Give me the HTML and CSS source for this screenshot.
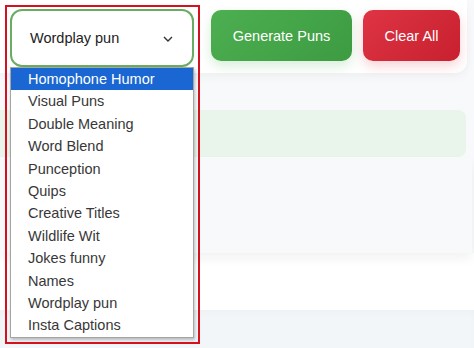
FILE: index.html
```html
<!DOCTYPE html>
<html lang="en">
<head>
  <meta charset="UTF-8">
  <meta name="viewport" content="width=device-width, initial-scale=1.0">
  <title>Pun Generator</title>
  <link rel="stylesheet" href="styles.css">
</head>
<body>
  <div class="page">
    <div class="toolbar">
      <div class="select-wrap">
        <div class="select-field">
          <span>Wordplay pun</span>
          <svg class="chevron" width="10" height="6" viewBox="0 0 10 6">
            <path d="M1 1 L5 5 L9 1" fill="none" stroke="#333" stroke-width="1.4"/>
          </svg>
        </div>
        <ul class="select-menu">
          <li class="active">Homophone Humor</li>
          <li>Visual Puns</li>
          <li>Double Meaning</li>
          <li>Word Blend</li>
          <li>Punception</li>
          <li>Quips</li>
          <li>Creative Titles</li>
          <li>Wildlife Wit</li>
          <li>Jokes funny</li>
          <li>Names</li>
          <li>Wordplay pun</li>
          <li>Insta Captions</li>
        </ul>
      </div>
      <button class="btn btn-generate">Generate Puns</button>
      <button class="btn btn-clear">Clear All</button>
    </div>

    <div class="result-bar"></div>
    <div class="result-list"></div>
    <div class="footer-card"></div>
    <div class="page-bottom"></div>

    <div class="highlight"></div>
  </div>
</body>
</html>
```

FILE: styles.css
```css
/* Pun generator page */
body {
  font-family: 'Liberation Sans', Arial, sans-serif;
  background-color: #f4f6f9;
  margin: 0;
  padding: 0;
}

.page {
  position: relative;
  width: 474px;
  height: 348px;
  overflow: hidden;
  background-color: #f8f9fb;
}

.toolbar {
  position: relative;
  z-index: 2;
  display: flex;
  align-items: flex-start;
  width: 467px;
  height: 73px;
  box-sizing: border-box;
  padding: 9px 0 0 10px;
  background-color: #ffffff;
  border-radius: 0 0 12px 0;
  box-shadow: 0 4px 10px rgba(0, 0, 0, 0.04);
}

.select-wrap {
  position: relative;
  margin-right: 17px;
}

.select-field {
  display: flex;
  align-items: center;
  justify-content: space-between;
  width: 184px;
  height: 58px;
  box-sizing: border-box;
  padding: 0 19px 0 18px;
  border: 2px solid #68ad62;
  border-radius: 12px;
  background-color: #ffffff;
  font-size: 14.5px;
  color: #222;
}

.chevron {
  margin-top: 2px;
}

.select-menu {
  position: absolute;
  left: 0;
  top: 58px;
  z-index: 2;
  width: 184px;
  margin: 0;
  padding: 0;
  list-style: none;
  box-sizing: border-box;
  background-color: #ffffff;
  border: 1px solid #a5a5a5;
  box-shadow: 1px 2px 3px rgba(0, 0, 0, 0.25);
}

.select-menu li {
  height: 22.4px;
  line-height: 22.4px;
  padding-left: 17px;
  font-size: 14.5px;
  color: #383838;
}

.select-menu li.active {
  background-color: #1a66d2;
  color: #ffffff;
}

.btn {
  height: 51px;
  margin-top: 1px;
  border: none;
  border-radius: 10px;
  font-family: 'Liberation Sans', Arial, sans-serif;
  font-size: 14.5px;
  color: #ffffff;
  cursor: pointer;
}

.btn-generate {
  width: 141px;
  margin-right: 11px;
  background: linear-gradient(135deg, #4caf50, #3d9b42);
  box-shadow: 0 5px 12px rgba(76, 175, 80, 0.22);
}

.btn-clear {
  width: 97px;
  background: linear-gradient(135deg, #de3444, #c8202f);
  box-shadow: 0 5px 12px rgba(220, 53, 69, 0.22);
}

.result-bar {
  width: 466px;
  height: 47px;
  margin-top: 37px;
  background-color: #e9f4ea;
  border-radius: 0 8px 8px 0;
}

.result-list {
  position: relative;
  z-index: 1;
  width: 472px;
  height: 96px;
  background-color: #f8f9fb;
  box-shadow: 0 6px 10px rgba(0, 0, 0, 0.05);
}

.footer-card {
  height: 57px;
  background-color: #ffffff;
}

.page-bottom {
  height: 40px;
  background-color: #f3f6f9;
  box-shadow: inset 0 4px 6px rgba(0, 0, 0, 0.02);
}

.highlight {
  position: absolute;
  left: 5px;
  top: 5px;
  width: 195px;
  height: 339px;
  box-sizing: border-box;
  border: 2px solid #d3111f;
  z-index: 3;
  pointer-events: none;
}
```
